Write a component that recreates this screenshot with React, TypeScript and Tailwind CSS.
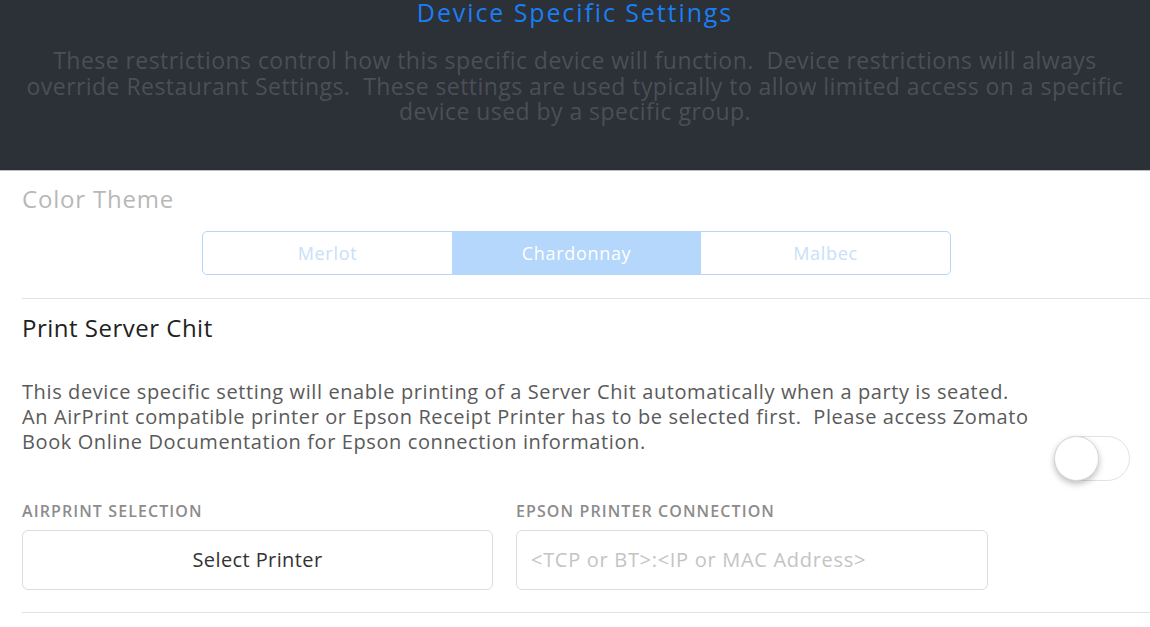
export default function App() {
  return (
    <div
      className="w-[1150px] h-[627px] overflow-hidden bg-white"
      style={{ fontFamily: '"Open Sans", "Liberation Sans", sans-serif' }}
    >
      {/* header */}
      <div className="flex h-[170px] flex-col bg-[#2c3037] px-[10px] text-center">
        <h1 className="-mt-[4px] text-[25px] leading-[32px] tracking-[1.9px] text-[#1a7ef2]">Device Specific Settings</h1>
        <p className="mt-[20px] whitespace-nowrap text-[23px] leading-[25.5px] tracking-[0.45px] text-[#4b4f56]">
          These restrictions control how this specific device will function.&nbsp; Device restrictions will always
          <br />
          override Restaurant Settings.&nbsp; These settings are used typically to allow limited access on a specific
          <br />
          device used by a specific group.
        </p>
      </div>

      <div className="border-t border-[#b9bcc0] pl-[22px]">
        {/* color theme */}
        <div className="border-b border-[#e3e3e3] pb-[23px]">
          <h2 className="pt-[13px] text-[24px] leading-[30px] tracking-[0.8px] text-[#b8b8b8]">Color Theme</h2>
          <div className="mt-[17px] ml-[180px] flex h-[44px] w-[749px] overflow-hidden rounded-[5px] border border-[#b4d6fb] text-[18px] tracking-[0.7px]">
            <div className="flex flex-1 items-center justify-center text-[#c8e0f9]">Merlot</div>
            <div className="flex flex-1 items-center justify-center bg-[#b4d7fb] text-white">Chardonnay</div>
            <div className="flex flex-1 items-center justify-center text-[#c8e0f9]">Malbec</div>
          </div>
        </div>

        {/* print server chit */}
        <div className="border-b border-[#e3e3e3] pb-[22px] pr-[20px]">
          <h2 className="pt-[14px] text-[24px] leading-[30px] tracking-[0.5px] text-[#222]">Print Server Chit</h2>
          <p className="mt-[36px] whitespace-nowrap text-[20px] leading-[25px] tracking-[0.6px] text-[#5a5a5a]">
            This device specific setting will enable printing of a Server Chit automatically when a party is seated.
            <br />
            An AirPrint compatible printer or Epson Receipt Printer has to be selected first.&nbsp; Please access Zomato
            <br />
            Book Online Documentation for Epson connection information.
          </p>
          <div className="flex justify-end">
            <div className="relative -mt-[18px] h-[45px] w-[76px] rounded-full border border-[#e2e2e2] bg-white">
              <div className="absolute -left-[1px] -top-[1px] h-[45px] w-[45px] rounded-full border border-[#d8d8d8] bg-white shadow-[0_3px_6px_rgba(0,0,0,0.25)]" />
            </div>
          </div>
          <div className="mt-[20px] flex gap-[23px]">
            <div className="w-[471px]">
              <div className="text-[16px] font-semibold leading-[20px] tracking-[1.1px] text-[#8c8c8c]">AIRPRINT SELECTION</div>
              <div className="mt-[9px] flex h-[60px] items-center justify-center rounded-[6px] border border-[#dcdcdc] text-[20px] tracking-[0.4px] text-[#333]">
                Select Printer
              </div>
            </div>
            <div className="w-[472px]">
              <div className="text-[16px] font-semibold leading-[20px] tracking-[1.1px] text-[#8c8c8c]">EPSON PRINTER CONNECTION</div>
              <div className="mt-[9px] flex h-[60px] items-center rounded-[6px] border border-[#dcdcdc] px-[14px] text-[20px] tracking-[0.7px] text-[#c4c4c4]">
                &lt;TCP or BT&gt;:&lt;IP or MAC Address&gt;
              </div>
            </div>
          </div>
        </div>
      </div>
    </div>
  );
}
